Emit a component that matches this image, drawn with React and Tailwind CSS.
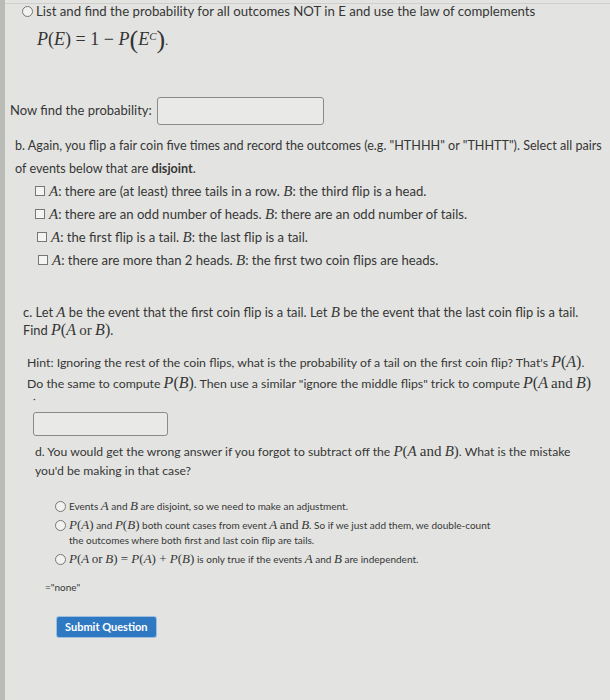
import React from "react";

const SERIF = { fontFamily: '"Liberation Serif", "DejaVu Serif", serif' };
const M = ({ children, className = "" }) => (
  <span className={"italic " + className} style={SERIF}>{children}</span>
);
const R = ({ children, className = "" }) => (
  <span className={"not-italic " + className} style={SERIF}>{children}</span>
);

const Radio = () => (
  <span className="inline-block w-[11px] h-[11px] rounded-full border border-[#777] bg-[#f2f2f0] mr-[3px] shrink-0" />
);
const Check = () => (
  <span className="inline-block w-[10px] h-[10px] border border-[#777] bg-[#f4f4f2] mr-[4px] shrink-0" />
);

export default function App() {
  return (
    <div className="w-[610px] h-[700px] overflow-hidden bg-[#e3e4e1] text-[#363636] border-l-[5px] border-[#b9bbb7]" style={{ fontFamily: 'Lato, "Liberation Sans", sans-serif' }}>
      <div className="h-px bg-[#cfd0cd] mt-[3px]" />
      <div className="pl-[17px] text-[13.2px] leading-[14px] flex items-center whitespace-nowrap">
        <Radio /><span>List and find the probability for all outcomes NOT in E and use the law of complements</span>
      </div>
      <div className="pl-[32px] mt-[7px] text-[18px] leading-[26px] text-[#333] whitespace-nowrap">
        <M>P</M><R>(</R><M>E</M><R>)</R> <R>= 1 −</R> <M>P</M><R className="text-[26px] align-[-3px]">(</R><M>E</M><sup className="text-[11px]"><M>C</M></sup><R className="text-[26px] align-[-3px]">)</R><span className="text-[12px]">.</span>
      </div>
      <div className="flex items-center pl-[5px] mt-[43px] text-[13px] whitespace-nowrap">
        <span>Now find the probability:</span>
        <div className="ml-[5px] w-[167px] h-[28px] border border-[#8a8a8a] rounded-[3px] bg-[#e9eae7]" />
      </div>
      <div className="pl-[10px] mt-[9px] text-[12.6px] leading-[23px] whitespace-nowrap">
        b. Again, you flip a fair coin five times and record the outcomes (e.g. "HTHHH" or "THHTT"). Select all pairs<br />of events below that are <b>disjoint</b>.
      </div>
      <div className="pl-[30px] mt-[3px] text-[13.1px] flex flex-col gap-[7px] leading-[16px] whitespace-nowrap">
        <div className="flex items-center"><Check /><M className="text-[15px]">A</M>: there are (at least) three tails in a row.&nbsp;<M className="text-[15px]">B</M>: the third flip is a head.</div>
        <div className="flex items-center"><Check /><M className="text-[15px]">A</M>: there are an odd number of heads.&nbsp;<M className="text-[15px]">B</M>: there are an odd number of tails.</div>
        <div className="flex items-center pl-[2px]"><Check /><M className="text-[15px]">A</M>: the first flip is a tail.&nbsp;<M className="text-[15px]">B</M>: the last flip is a tail.</div>
        <div className="flex items-center pl-[3px]"><Check /><M className="text-[15px]">A</M>: there are more than 2 heads.&nbsp;<M className="text-[15px]">B</M>: the first two coin flips are heads.</div>
      </div>
      <div className="pl-[18px] mt-[35px] text-[12.9px] leading-[18px] whitespace-nowrap">
        c. Let <M className="text-[15px]">A</M> be the event that the first coin flip is a tail. Let <M className="text-[15px]">B</M> be the event that the last coin flip is a tail.<br />
        Find <M className="text-[16px]">P</M><R className="text-[16px]">(</R><M className="text-[16px]">A</M> <R className="text-[15px]">or</R> <M className="text-[16px]">B</M><R className="text-[16px]">)</R>.
      </div>
      <div className="pl-[22px] mt-[13px] text-[12.3px] leading-[20px] whitespace-nowrap">
        Hint: Ignoring the rest of the coin flips, what is the probability of a tail on the first coin flip? That's <M className="text-[16px]">P</M><R className="text-[16px]">(</R><M className="text-[16px]">A</M><R className="text-[16px]">)</R>.<br />
        Do the same to compute <M className="text-[16px]">P</M><R className="text-[16px]">(</R><M className="text-[16px]">B</M><R className="text-[16px]">)</R>. Then use a similar "ignore the middle flips" trick to compute <M className="text-[16px]">P</M><R className="text-[16px]">(</R><M className="text-[16px]">A</M> <R className="text-[15px]">and</R> <M className="text-[16px]">B</M><R className="text-[16px]">)</R>
      </div>
      <div className="pl-[28px] text-[10px] leading-[10px] mt-[-1px]">·</div>
      <div className="ml-[28px] mt-[9px] w-[135px] h-[24px] border border-[#8a8a8a] rounded-[3px] bg-[#e9eae7]" />
      <div className="pl-[30px] mt-[6px] text-[12.2px] leading-[19px] whitespace-nowrap">
        d. You would get the wrong answer if you forgot to subtract off the <M className="text-[15px]">P</M><R className="text-[15px]">(</R><M className="text-[15px]">A</M> <R className="text-[15px]">and</R> <M className="text-[15px]">B</M><R className="text-[15px]">)</R>. What is the mistake<br />
        you'd be making in that case?
      </div>
      <div className="pl-[50px] mt-[18px] text-[10px] leading-[15px] flex flex-col gap-[3px] whitespace-nowrap">
        <div className="flex items-center"><Radio /><span>Events <M className="text-[13px]">A</M> and <M className="text-[13px]">B</M> are disjoint, so we need to make an adjustment.</span></div>
        <div className="flex items-start">
          <span className="mt-[3px] flex"><Radio /></span>
          <span><M className="text-[13px]">P</M><R className="text-[13px]">(</R><M className="text-[13px]">A</M><R className="text-[13px]">)</R> and <M className="text-[13px]">P</M><R className="text-[13px]">(</R><M className="text-[13px]">B</M><R className="text-[13px]">)</R> both count cases from event <M className="text-[13px]">A</M> <R className="text-[13px]">and</R> <M className="text-[13px]">B</M>. So if we just add them, we double-count<br />the outcomes where both first and last coin flip are tails.</span>
        </div>
        <div className="flex items-center"><Radio /><span><M className="text-[13px]">P</M><R className="text-[13px]">(</R><M className="text-[13px]">A</M> <R className="text-[13px]">or</R> <M className="text-[13px]">B</M><R className="text-[13px]">) = </R><M className="text-[13px]">P</M><R className="text-[13px]">(</R><M className="text-[13px]">A</M><R className="text-[13px]">) + </R><M className="text-[13px]">P</M><R className="text-[13px]">(</R><M className="text-[13px]">B</M><R className="text-[13px]">)</R> is only true if the events <M className="text-[13px]">A</M> and <M className="text-[13px]">B</M> are independent.</span></div>
      </div>
      <div className="pl-[40px] mt-[14px] text-[10px] leading-[12px]">="none"</div>
      <div className="pl-[52px] mt-[20px]">
        <button className="bg-[#2f78c2] text-white text-[11px] font-bold px-[8px] h-[20px] rounded-[2px] leading-[20px] shadow-[0_0_0_1px_#9fbfe0]" style={{ fontFamily: 'Lato, sans-serif' }}>Submit Question</button>
      </div>
    </div>
  );
}
